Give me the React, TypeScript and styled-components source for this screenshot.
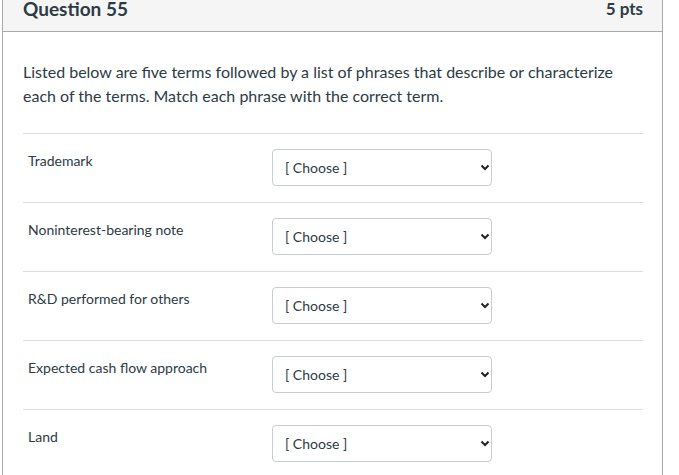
import React from 'react'
import styled, { createGlobalStyle } from 'styled-components'

const GlobalStyle = createGlobalStyle`
  body {
    margin: 0;
    background: #fff;
    font-family: Lato, "Open Sans", sans-serif;
    color: #2d3b45;
    overflow: hidden;
  }
`

const Page = styled.div`
  padding: 0 16px 0 2px;
  margin-top: -14px;
`

const Panel = styled.div`
  border: 1px solid #aaaaaa;
  background: #fff;
`

const Header = styled.div`
  display: flex;
  justify-content: space-between;
  align-items: center;
  background: #f5f5f5;
  border-bottom: 1px solid #aaaaaa;
  padding: 8px 19px 9px 20px;
`

const Title = styled.div`
  font-size: 19px;
  font-weight: 700;
  line-height: 27px;
`

const Points = styled.div`
  font-size: 17px;
  font-weight: 700;
  line-height: 27px;
  color: #2d3b45;
`

const Body = styled.div`
  padding: 28px 19px 0 20px;
`

const Intro = styled.p`
  margin: 0 0 25px;
  font-size: 16px;
  line-height: 24px;
`

const Row = styled.div`
  display: grid;
  grid-template-columns: 249px 220px;
  border-top: 1px solid #dddddd;
  padding: 15px 0 16px;
`

const Term = styled.div`
  padding: 2px 0 0 5px;
  font-size: 14px;
  line-height: 20px;
`

const SelectWrap = styled.div`
  position: relative;
  height: 37px;
`

const Select = styled.select`
  appearance: none;
  width: 100%;
  height: 37px;
  border: 1px solid #c7cdd1;
  border-radius: 4px;
  background: #fff;
  padding: 0 24px 0 12px;
  font-family: Lato, "Open Sans", sans-serif;
  font-size: 14px;
  color: #2d3b45;
`

const Chevron = styled.svg`
  position: absolute;
  right: 2px;
  top: 15px;
  pointer-events: none;
`

const terms = [
  'Trademark',
  'Noninterest-bearing note',
  'R&D performed for others',
  'Expected cash flow approach',
  'Land',
]

export default function App() {
  return (
    <>
      <GlobalStyle />
      <Page>
        <Panel>
          <Header>
            <Title>Question 55</Title>
            <Points>5 pts</Points>
          </Header>
          <Body>
            <Intro>
              Listed below are five terms followed by a list of phrases that describe or characterize
              each of the terms. Match each phrase with the correct term.
            </Intro>
            {terms.map(t => (
              <Row key={t}>
                <Term>{t}</Term>
                <SelectWrap>
                  <Select defaultValue="">
                    <option value="">[ Choose ]</option>
                  </Select>
                  <Chevron width="10" height="7" viewBox="0 0 10 7">
                    <path d="M1.5 1.5 L5 5 L8.5 1.5" fill="none" stroke="#222" strokeWidth="2" />
                  </Chevron>
                </SelectWrap>
              </Row>
            ))}
          </Body>
        </Panel>
      </Page>
    </>
  )
}
